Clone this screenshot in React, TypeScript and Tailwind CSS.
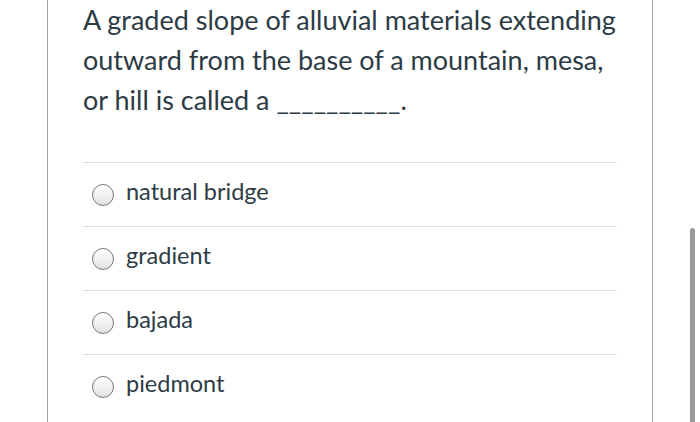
import React from "react";

const options = ["natural bridge", "gradient", "bajada", "piedmont"];

function Radio() {
  return (
    <span className="inline-block h-[22px] w-[22px] shrink-0 rounded-full border-[1.5px] border-[#7a7a7a] bg-gradient-to-b from-[#ffffff] to-[#e2e2e2]" />
  );
}

export default function App() {
  return (
    <div className="relative h-[422px] w-[700px] overflow-hidden bg-white font-['Lato','Liberation_Sans',sans-serif] text-[#2d3b45]">
      <div className="ml-[47px] h-full w-[606px] border-x border-[#a5a5a5] px-[35px]">
        <p className="text-[27px] leading-[40px]">
          A graded slope of alluvial materials extending outward from the base of a mountain, mesa,
          or hill is called a <span className="tracking-[0px]">__________</span>.
        </p>
        <div className="mt-[42px]">
          {options.map((o) => (
            <div key={o} className="flex h-[64px] items-center gap-[12px] border-t border-[#dcdcdc] pl-[9px]">
              <Radio />
              <span className="pb-[5px] text-[23.5px]">{o}</span>
            </div>
          ))}
        </div>
      </div>
      {/* scrollbar */}
      <div className="absolute right-[5px] top-[228px] h-[200px] w-[5px] rounded-full bg-[#9a9a9a]" />
    </div>
  );
}
